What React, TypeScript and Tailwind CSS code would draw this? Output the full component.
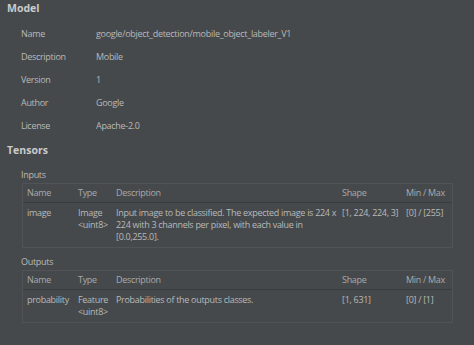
import React from "react";

const font = { fontFamily: '"Open Sans", "Noto Sans", sans-serif' };

type Row = { name: string; type: string[]; desc: string[]; shape: string; mm: string };

function TensorTable({ rows, h }: { rows: Row[]; h: number }) {
  return (
    <div className="ml-[22px] mr-[21px] border border-[#505357]">
      <div className="flex h-[19px] items-center border-b border-[#393c3e] text-[#a9aaab]">
        <div className="w-[55px] pl-[4px] shrink-0">Name</div>
        <div className="w-[38px] shrink-0">Type</div>
        <div className="w-[226px] shrink-0">Description</div>
        <div className="w-[64px] shrink-0">Shape</div>
        <div className="shrink-0">Min / Max</div>
      </div>
      {rows.map((r) => (
        <div key={r.name} className="flex pt-[4px] leading-[12px]" style={{ height: h }}>
          <div className="w-[55px] pl-[4px] shrink-0">{r.name}</div>
          <div className="w-[38px] shrink-0">
            {r.type.map((t) => (
              <div key={t}>{t}</div>
            ))}
          </div>
          <div className="w-[226px] shrink-0">
            {r.desc.map((t) => (
              <div key={t} className="whitespace-nowrap">{t}</div>
            ))}
          </div>
          <div className="w-[64px] shrink-0">{r.shape}</div>
          <div className="shrink-0">{r.mm}</div>
        </div>
      ))}
    </div>
  );
}

function KV({ k, v }: { k: string; v: string }) {
  return (
    <div className="flex h-[23px] items-center pl-[21px]">
      <div className="w-[75px]">{k}</div>
      <div>{v}</div>
    </div>
  );
}

export default function App() {
  return (
    <div
      className="w-[474px] h-[345px] bg-[#46494b] text-[#b8b9ba] text-[9px] tracking-[-0.3px] overflow-hidden"
      style={font}
    >
      <div className="pl-[7px] h-[17px] flex items-center font-bold text-[10.5px] tracking-normal text-[#cacbcc]">Model</div>
      <div className="mt-[5px]">
        <KV k="Name" v="google/object_detection/mobile_object_labeler_V1" />
        <KV k="Description" v="Mobile" />
        <KV k="Version" v="1" />
        <KV k="Author" v="Google" />
        <KV k="License" v="Apache-2.0" />
      </div>
      <div className="pl-[7px] mt-[5px] h-[17px] flex items-center font-bold text-[10.5px] tracking-normal text-[#cacbcc]">Tensors</div>
      <div className="pl-[21px] mt-[9px] h-[14px] flex items-center">Inputs</div>
      <div className="mt-[1px]">
        <TensorTable
          h={44}
          rows={[
            {
              name: "image",
              type: ["Image", "<uint8>"],
              desc: [
                "Input image to be classified. The expected image is 224 x",
                "224 with 3 channels per pixel, with each value in",
                "[0.0,255.0].",
              ],
              shape: "[1, 224, 224, 3]",
              mm: "[0] / [255]",
            },
          ]}
        />
      </div>
      <div className="pl-[21px] mt-[7px] h-[14px] flex items-center">Outputs</div>
      <div className="mt-[1px]">
        <TensorTable
          h={32}
          rows={[
            {
              name: "probability",
              type: ["Feature", "<uint8>"],
              desc: ["Probabilities of the outputs classes."],
              shape: "[1, 631]",
              mm: "[0] / [1]",
            },
          ]}
        />
      </div>
    </div>
  );
}
